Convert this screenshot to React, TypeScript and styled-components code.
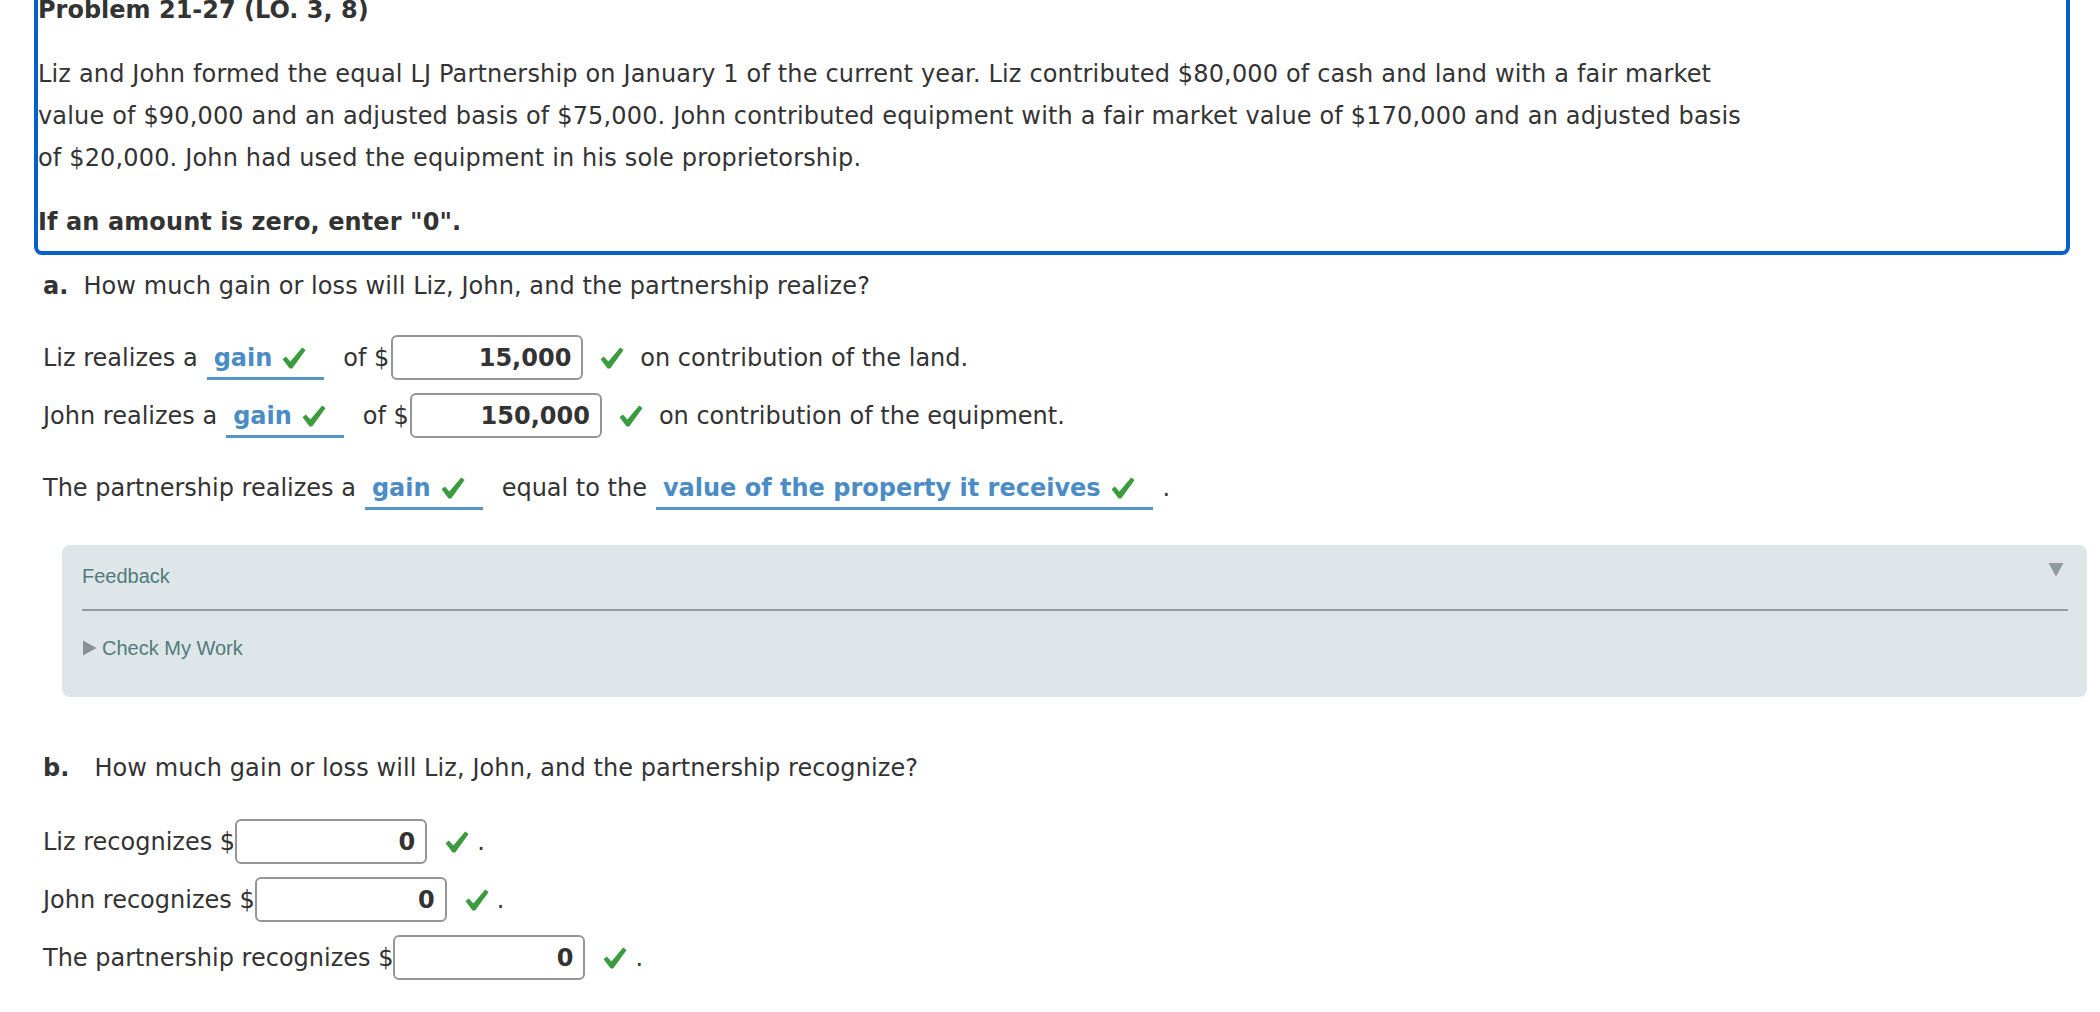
import React from "react";
import styled, { createGlobalStyle } from "styled-components";

const GlobalStyle = createGlobalStyle`
  html, body { margin: 0; padding: 0; background: #ffffff; }
  body {
    font-family: "DejaVu Sans", Verdana, sans-serif;
    color: #333333;
    font-size: 24px;
    overflow: hidden;
  }
`;

const Page = styled.div`
  width: 2100px;
  height: 1012px;
  overflow: hidden;
  box-sizing: border-box;
`;

const ProblemBox = styled.section`
  margin: -15px 30px 0 34px;
  border: 4px solid #0660cc;
  border-radius: 8px;
  padding: 0 0 8px 0;
  line-height: 42px;
`;

const Title = styled.h2`
  margin: 0;
  font-size: 24px;
  font-weight: bold;
  line-height: 42px;
`;

const Paragraph = styled.p<{ $bold?: boolean }>`
  margin: 22px 0 0 0;
  font-weight: ${(p) => (p.$bold ? "bold" : "normal")};
  white-space: nowrap;
  line-height: 42px;
  letter-spacing: ${(p) => (p.$bold ? "0.1px" : "0.16px")};
`;

const Content = styled.div`
  padding: 10px 13px 0 43px;
`;

const Question = styled.div<{ $top: number }>`
  margin-top: ${(p) => p.$top}px;
  line-height: 42px;
  display: flex;
  white-space: nowrap;
  letter-spacing: 0.08px;
`;

const Letter = styled.span<{ $gap: number }>`
  font-weight: bold;
  margin-right: ${(p) => p.$gap}px;
`;

const Row = styled.div<{ $top: number }>`
  display: flex;
  align-items: center;
  height: 45px;
  margin-top: ${(p) => p.$top}px;
  white-space: nowrap;
`;

const Text = styled.span<{ $ml?: number }>`
  margin-left: ${(p) => p.$ml ?? 0}px;
`;

const Dropdown = styled.span<{ $ml?: number }>`
  display: inline-flex;
  align-items: center;
  box-sizing: border-box;
  height: 45px;
  padding: 3px 18px 0 7px;
  margin-left: ${(p) => p.$ml ?? 9}px;
  border-bottom: 3px solid #5595c9;
  color: #4b8cc6;
  font-weight: bold;
  gap: 10px;
`;

const Input = styled.div<{ $ml?: number }>`
  box-sizing: border-box;
  width: 192px;
  height: 45px;
  margin-left: ${(p) => p.$ml ?? 0}px;
  border: 2px solid #959595;
  border-radius: 6px;
  background: #ffffff;
  padding: 0 10px 0 0;
  display: flex;
  align-items: center;
  justify-content: flex-end;
  font-weight: bold;
  color: #333333;
`;

const CheckWrap = styled.span<{ $ml?: number; $mr?: number }>`
  display: inline-flex;
  align-items: center;
  margin-left: ${(p) => p.$ml ?? 0}px;
  margin-right: ${(p) => p.$mr ?? 0}px;
`;

const FeedbackBox = styled.div`
  margin: 35px 0 0 19px;
  background: #dee6e9;
  border-radius: 8px;
  padding: 18px 19px 36px 20px;
  font-family: "Liberation Sans", Arial, sans-serif;
  font-size: 20px;
  color: #4f7b7b;
`;

const FeedbackHeader = styled.div`
  display: flex;
  justify-content: space-between;
  align-items: flex-start;
  line-height: 26px;
`;

const Divider = styled.div`
  height: 2px;
  background: #959c9f;
  margin-top: 20px;
`;

const CheckMyWork = styled.div`
  display: flex;
  align-items: center;
  margin-top: 24px;
  line-height: 26px;
  gap: 5px;
`;

const Check = () => (
  <svg width="24" height="22" viewBox="0 0 24 22" aria-hidden="true">
    <path
      d="M0.6 12.2 L3.8 9.6 L8.4 14.4 L20.2 0.6 L23.6 3.0 L10.2 21.4 L7.6 21.4 Z"
      fill="#3b9b3f"
    />
  </svg>
);

const DownTriangle = () => (
  <svg width="16" height="15" viewBox="0 0 16 15" style={{ marginRight: 4, marginTop: -1 }} aria-hidden="true">
    <path d="M0.5 1 L15.5 1 L8 14.5 Z" fill="#8f9a9e" />
  </svg>
);

const RightTriangle = () => (
  <svg width="15" height="16" viewBox="0 0 15 16" aria-hidden="true">
    <path d="M1 0.5 L14.5 8 L1 15.5 Z" fill="#8d9193" />
  </svg>
);

const Gain = ({ label, ml }: { label: string; ml?: number }) => (
  <Dropdown $ml={ml}>
    <span>{label}</span>
    <Check />
  </Dropdown>
);

export default function App() {
  return (
    <Page>
      <GlobalStyle />
      <ProblemBox>
        <Title>Problem 21-27 (LO. 3, 8)</Title>
        <Paragraph>
          Liz and John formed the equal LJ Partnership on January 1 of the current year. Liz contributed $80,000 of cash and land with a fair market
          <br />
          value of $90,000 and an adjusted basis of $75,000. John contributed equipment with a fair market value of $170,000 and an adjusted basis
          <br />
          of $20,000. John had used the equipment in his sole proprietorship.
        </Paragraph>
        <Paragraph $bold>If an amount is zero, enter "0".</Paragraph>
      </ProblemBox>

      <Content>
        <Question $top={0}>
          <Letter $gap={15}>a.</Letter>
          <span>How much gain or loss will Liz, John, and the partnership realize?</span>
        </Question>

        <Row $top={28}>
          <Text>Liz realizes a</Text>
          <Gain label="gain" />
          <Text $ml={19}>of $</Text>
          <Input $ml={2}>15,000</Input>
          <CheckWrap $ml={17}>
            <Check />
          </CheckWrap>
          <Text $ml={16}>on contribution of the land.</Text>
        </Row>

        <Row $top={13}>
          <Text>John realizes a</Text>
          <Gain label="gain" />
          <Text $ml={19}>of $</Text>
          <Input $ml={1}>150,000</Input>
          <CheckWrap $ml={17}>
            <Check />
          </CheckWrap>
          <Text $ml={16}>on contribution of the equipment.</Text>
        </Row>

        <Row $top={27}>
          <Text>The partnership realizes a</Text>
          <Gain label="gain" />
          <Text $ml={19}>equal to the</Text>
          <Gain label="value of the property it receives" />
          <Text $ml={10}>.</Text>
        </Row>

        <FeedbackBox>
          <FeedbackHeader>
            <span>Feedback</span>
            <DownTriangle />
          </FeedbackHeader>
          <Divider />
          <CheckMyWork>
            <RightTriangle />
            <span>Check My Work</span>
          </CheckMyWork>
        </FeedbackBox>

        <Question $top={50}>
          <Letter $gap={25}>b.</Letter>
          <span>How much gain or loss will Liz, John, and the partnership recognize?</span>
        </Question>

        <Row $top={30}>
          <Text>Liz recognizes $</Text>
          <Input>0</Input>
          <CheckWrap $ml={18} $mr={8}>
            <Check />
          </CheckWrap>
          <Text>.</Text>
        </Row>

        <Row $top={13}>
          <Text>John recognizes $</Text>
          <Input>0</Input>
          <CheckWrap $ml={18} $mr={8}>
            <Check />
          </CheckWrap>
          <Text>.</Text>
        </Row>

        <Row $top={13}>
          <Text>The partnership recognizes $</Text>
          <Input>0</Input>
          <CheckWrap $ml={18} $mr={8}>
            <Check />
          </CheckWrap>
          <Text>.</Text>
        </Row>
      </Content>
    </Page>
  );
}
